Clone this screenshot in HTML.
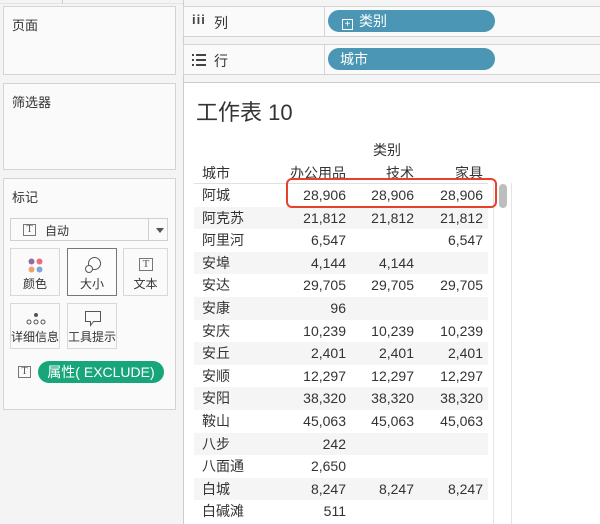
<!DOCTYPE html>
<html style="height:524px;overflow:hidden"><head><meta charset="utf-8"><style>
*{margin:0;padding:0;box-sizing:border-box}
body{width:600px;height:524px;background:#f4f4f4;font-family:"Liberation Sans","Noto Sans CJK SC",sans-serif;color:#333;position:relative;overflow:hidden;font-size:13px}
.a{position:absolute}
.panel{position:absolute;background:#fafafa;border:1px solid #d4d4d4}
.ttl{position:absolute;left:8px;top:8px;font-size:13px;color:#333}
.btn{position:absolute;background:#fafafa;border:1px solid #d8d8d8;text-align:center;font-size:12px}
.btn span{position:absolute;left:0;right:0;bottom:3px}
.ticon{display:inline-block;width:13px;height:12px;border:1px solid #777;font-size:10px;line-height:10px;text-align:center;font-family:"Liberation Serif",serif;color:#555}
.pill{position:absolute;border-radius:11px;color:#fff;font-size:14px;line-height:22px}
.row{position:absolute;left:194px;width:294px;height:22.6px;font-size:14px;line-height:22px}
.row.g{background:#f5f5f5}
.row .c{position:absolute;left:8px}
.row .n{position:absolute;text-align:right;width:70px}
</style></head><body>
<div class="a" style="left:0;top:0;width:183px;height:4px;border-bottom:1px solid #e4e4e4"></div>
<div class="a" style="left:183px;top:0;width:1px;height:524px;background:#ccc"></div>
<div class="a" style="left:62px;top:0;width:1px;height:4px;background:#ccc"></div>
<div class="panel" style="left:3px;top:6px;width:173px;height:69px"><div class="ttl">页面</div></div>
<div class="panel" style="left:3px;top:83px;width:173px;height:87px"><div class="ttl">筛选器</div></div>
<div class="panel" style="left:3px;top:178px;width:173px;height:232px"><div class="ttl" style="top:8px">标记</div></div>
<div class="a" style="left:10px;top:218px;width:158px;height:23px;background:#fafafa;border:1px solid #d0d0d0">
 <span class="ticon a" style="left:12px;top:5px">T</span>
 <span class="a" style="left:34px;top:3px;font-size:12px">自动</span>
 <div class="a" style="left:137px;top:0;width:1px;height:21px;background:#d0d0d0"></div>
 <div class="a" style="left:145px;top:9px;width:0;height:0;border-left:4px solid transparent;border-right:4px solid transparent;border-top:5px solid #555"></div>
</div>
<div class="btn" style="left:10px;top:248px;width:50px;height:48px">
 <svg class="a" style="left:16px;top:8px" width="18" height="18"><circle cx="4.5" cy="4.5" r="3" fill="#8f6da3"/><circle cx="12.5" cy="4.5" r="3" fill="#ef6b7a"/><circle cx="4.5" cy="12.5" r="3" fill="#f0a06b"/><circle cx="12.5" cy="12.5" r="3" fill="#7ba6d6"/></svg>
 <span>颜色</span></div>
<div class="btn" style="left:67px;top:248px;width:50px;height:48px;border-color:#777;background:#fcfcfc">
 <svg class="a" style="left:15px;top:6px" width="20" height="20" fill="none" stroke="#555"><circle cx="11.5" cy="8.5" r="6"/><circle cx="6" cy="14" r="3.5" fill="#fcfcfc"/></svg>
 <span>大小</span></div>
<div class="btn" style="left:123px;top:248px;width:45px;height:48px">
 <span class="ticon a" style="left:15px;top:9px;width:14px;height:13px;line-height:11px;font-size:11px;bottom:auto">T</span>
 <span>文本</span></div>
<div class="btn" style="left:10px;top:303px;width:50px;height:46px">
 <svg class="a" style="left:14px;top:8px" width="22" height="14" fill="none" stroke="#555"><circle cx="11" cy="3" r="2" fill="#555" stroke="none"/><circle cx="4" cy="10" r="2"/><circle cx="11" cy="10" r="2"/><circle cx="18" cy="10" r="2"/></svg>
 <span>详细信息</span></div>
<div class="btn" style="left:67px;top:303px;width:50px;height:46px">
 <svg class="a" style="left:16px;top:6px" width="18" height="18" fill="none" stroke="#555"><path d="M1.5 1.5h15v10h-7l-3 4v-4h-5z"/></svg>
 <span>工具提示</span></div>
<span class="ticon a" style="left:18px;top:366px">T</span>
<div class="pill" style="left:38px;top:361px;width:126px;background:#18a57a;text-align:center;font-size:14px">属性( EXCLUDE)</div>
<div class="a" style="left:183px;top:6px;width:417px;height:31px;background:#fafafa;border:1px solid #d4d4d4;border-right:none">
 <div class="a" style="left:140px;top:0;width:1px;height:29px;background:#d4d4d4"></div>
 <span class="a" style="left:8px;top:5px;font-size:13px;letter-spacing:1px;font-weight:bold;color:#444">iii</span>
 <span class="a" style="left:30px;top:6px;font-size:14px">列</span>
</div>
<div class="pill" style="left:328px;top:10px;width:167px;background:#4a96b4"><span style="display:inline-block;width:11px;height:11px;border:1px solid #fff;margin:0 6px 0 14px;font-size:10px;line-height:9px;text-align:center;vertical-align:-1px">+</span>类别</div>
<div class="a" style="left:183px;top:44px;width:417px;height:31px;background:#fafafa;border:1px solid #d4d4d4;border-right:none">
 <div class="a" style="left:140px;top:0;width:1px;height:29px;background:#d4d4d4"></div>
 <svg class="a" style="left:8px;top:9px" width="14" height="12" fill="#444"><rect x="0" y="0" width="2" height="2"/><rect x="4" y="0" width="10" height="2"/><rect x="0" y="5" width="2" height="2"/><rect x="4" y="5" width="10" height="2"/><rect x="0" y="10" width="2" height="2"/><rect x="4" y="10" width="10" height="2"/></svg>
 <span class="a" style="left:30px;top:6px;font-size:14px">行</span>
</div>
<div class="pill" style="left:328px;top:48px;width:167px;background:#4a96b4;padding-left:12px">城市</div>
<div class="a" style="left:183px;top:82px;width:417px;height:442px;background:#fff;border:1px solid #ccc;border-right:none;border-bottom:none"></div>
<div class="a" style="left:196px;top:95px;font-size:22px;color:#333">工作表 10</div>
<div class="a" style="left:373px;top:140px;font-size:14px">类别</div>
<div class="a" style="left:202px;top:163px;font-size:14px">城市</div>
<div class="a" style="left:266px;top:163px;width:80px;text-align:right;font-size:14px">办公用品</div>
<div class="a" style="left:344px;top:163px;width:70px;text-align:right;font-size:14px">技术</div>
<div class="a" style="left:413px;top:163px;width:70px;text-align:right;font-size:14px">家具</div>
<div class="a" style="left:194px;top:183px;width:294px;height:1px;background:#e0e0e0"></div>
<div class="a" style="left:493px;top:183px;width:1px;height:341px;background:#e4e4e4"></div>
<div class="a" style="left:511px;top:183px;width:1px;height:341px;background:#e4e4e4"></div>
<div class="a" style="left:499px;top:184px;width:8px;height:24px;border-radius:4px;background:#bdbdbd"></div>
<div class="row" style="top:184px"><span class="c">阿城</span><span class="n" style="left:82px">28,906</span><span class="n" style="left:150px">28,906</span><span class="n" style="left:219px">28,906</span></div>
<div class="row g" style="top:206.6px"><span class="c">阿克苏</span><span class="n" style="left:82px">21,812</span><span class="n" style="left:150px">21,812</span><span class="n" style="left:219px">21,812</span></div>
<div class="row" style="top:229.2px"><span class="c">阿里河</span><span class="n" style="left:82px">6,547</span><span class="n" style="left:219px">6,547</span></div>
<div class="row g" style="top:251.8px"><span class="c">安埠</span><span class="n" style="left:82px">4,144</span><span class="n" style="left:150px">4,144</span></div>
<div class="row" style="top:274.4px"><span class="c">安达</span><span class="n" style="left:82px">29,705</span><span class="n" style="left:150px">29,705</span><span class="n" style="left:219px">29,705</span></div>
<div class="row g" style="top:297px"><span class="c">安康</span><span class="n" style="left:82px">96</span></div>
<div class="row" style="top:319.6px"><span class="c">安庆</span><span class="n" style="left:82px">10,239</span><span class="n" style="left:150px">10,239</span><span class="n" style="left:219px">10,239</span></div>
<div class="row g" style="top:342.2px"><span class="c">安丘</span><span class="n" style="left:82px">2,401</span><span class="n" style="left:150px">2,401</span><span class="n" style="left:219px">2,401</span></div>
<div class="row" style="top:364.8px"><span class="c">安顺</span><span class="n" style="left:82px">12,297</span><span class="n" style="left:150px">12,297</span><span class="n" style="left:219px">12,297</span></div>
<div class="row g" style="top:387.4px"><span class="c">安阳</span><span class="n" style="left:82px">38,320</span><span class="n" style="left:150px">38,320</span><span class="n" style="left:219px">38,320</span></div>
<div class="row" style="top:410px"><span class="c">鞍山</span><span class="n" style="left:82px">45,063</span><span class="n" style="left:150px">45,063</span><span class="n" style="left:219px">45,063</span></div>
<div class="row g" style="top:432.6px"><span class="c">八步</span><span class="n" style="left:82px">242</span></div>
<div class="row" style="top:455.2px"><span class="c">八面通</span><span class="n" style="left:82px">2,650</span></div>
<div class="row g" style="top:477.8px"><span class="c">白城</span><span class="n" style="left:82px">8,247</span><span class="n" style="left:150px">8,247</span><span class="n" style="left:219px">8,247</span></div>
<div class="row" style="top:500.4px;height:23.6px"><span class="c">白碱滩</span><span class="n" style="left:82px">511</span></div>
<div class="a" style="left:286px;top:178px;width:211px;height:30px;border:2.5px solid #e8402a;border-radius:6px"></div>
</body></html>
